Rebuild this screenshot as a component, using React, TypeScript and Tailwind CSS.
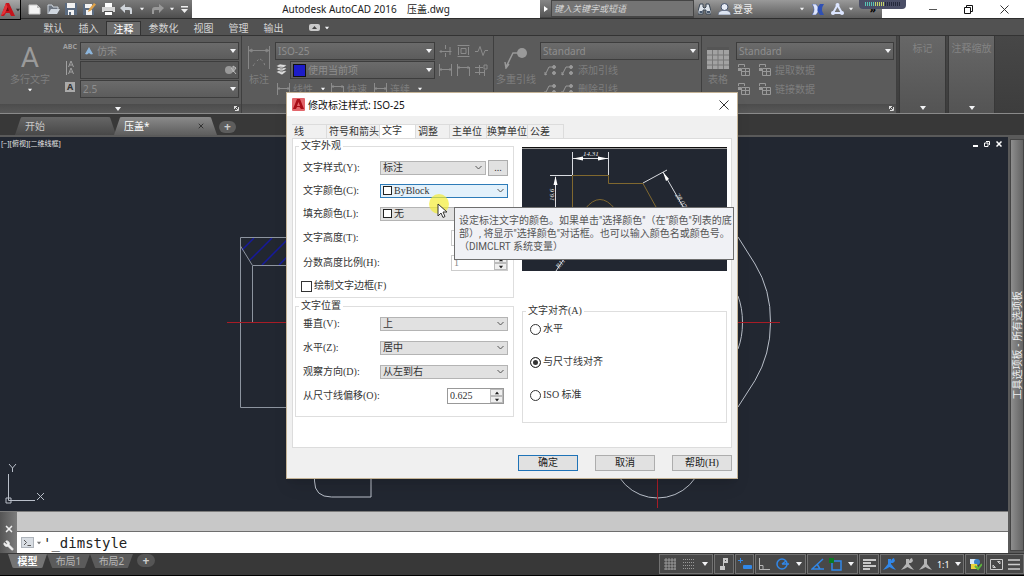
import type { ReactNode } from "react";
import { Wrench, X } from "lucide-react";
import clsx from "clsx";

const ribbonTabs = ["默认", "插入", "注释", "参数化", "视图", "管理", "输出"];

const dialogTabs = [
  { name: "线", width: "w-[35px]" },
  { name: "符号和箭头", width: "w-[53px]" },
  { name: "文字", width: "w-9" },
  { name: "调整", width: "w-[34px]" },
  { name: "主单位", width: "w-[37px]" },
  { name: "换算单位", width: "w-[41px]" },
  { name: "公差", width: "w-9" },
];

function Caret({ className = "text-gray-100" }: { className?: string }) {
  return (
    <svg viewBox="0 0 6 4" className={clsx("w-1.5 h-1 shrink-0", className)}>
      <path d="M0 0h6L3 4z" fill="currentColor" />
    </svg>
  );
}

function TitleBar() {
  return (
    <header className="flex h-[18px] shrink-0 bg-white">
      <div className="flex w-48 shrink-0 items-center bg-linear-to-b from-[#7b7b7b] to-[#4e4e4e] text-[#e8e8e8]">
        <button
          aria-label="应用程序菜单"
          className="relative z-10 mt-0.5 flex h-5 w-[21px] shrink-0 items-center border-r border-b border-black bg-linear-to-b from-[#a8a8a8] to-[#6c6c6c] pl-px"
        >
          <svg viewBox="0 0 14 14" className="size-3.5 shrink-0">
            <path d="M5 0h3l6 13H10L8.500 10H5L3 13H0z" fill="#c4141c" />
            <path d="M6.500 4L8 8H5z" fill="#7d0a10" />
            <path d="M5 0L0 13l4-3 2.500-6z" fill="#e3343a" />
          </svg>
          <Caret className="text-[#333] scale-75" />
        </button>
        <div className="flex flex-1 items-center justify-between pr-1 pl-[7px]">
          <button aria-label="新建">
            <svg viewBox="0 0 13 11" className="w-[13px] h-[11px]">
              <path d="M1 1h8l3 3v6H1z" fill="#f4f4f4" stroke="#ccc" />
              <path d="M9 1v3h3" fill="#bbb" />
            </svg>
          </button>
          <button aria-label="打开">
            <svg viewBox="0 0 13 11" className="w-[13px] h-[11px]">
              <path d="M1 10V1h4l1 2h5v2" fill="#6d7580" stroke="#cfd6de" />
              <path d="M1 10l3-5h9l-3 5z" fill="#cfd6de" />
            </svg>
          </button>
          <button aria-label="保存">
            <svg viewBox="0 0 12 12" className="size-3">
              <path d="M0 0h12v12H0z" fill="#5b6b80" />
              <path d="M2 0h8v5H2zM3 7h6v5H3z" fill="#f2f2f2" />
              <path d="M4 9h2v3H4z" fill="#5b6b80" />
            </svg>
          </button>
          <button aria-label="另存为">
            <svg viewBox="0 0 13 12" className="w-[13px] h-3">
              <path d="M0 1h11v11H0z" fill="#5b6b80" />
              <path d="M2 1h7v4H2zM3 7h6v5H3z" fill="#f2f2f2" />
              <path d="M5 9l1-3 5-6 2 1.500-5 6z" fill="#dfa24a" />
            </svg>
          </button>
          <button aria-label="打印">
            <svg viewBox="0 0 13 12" className="w-[13px] h-3">
              <path d="M3 0h7v4H3zM3 8h7v4H3z" fill="#fff" />
              <path d="M0 4h13v5H0z" fill="#d5d5d5" />
              <path d="M2 8h9v1H2z" fill="#555" />
            </svg>
          </button>
          <button aria-label="放弃">
            <svg viewBox="0 0 13 10" className="w-[13px] h-2.5">
              <path d="M0 4l5-4v3h4q3 0 3 3v4h-2V7q0-1-1-1H5v3z" fill="#cfd4da" />
            </svg>
          </button>
          <Caret className="text-gray-100 scale-75" />
          <button aria-label="重做">
            <svg viewBox="0 0 13 10" className="w-[13px] h-2.5">
              <path d="M13 4L8 0v3H4Q1 3 1 6v4h2V7q0-1 1-1h4v3z" fill="#999" />
            </svg>
          </button>
          <Caret className="text-gray-100 scale-75" />
          <svg viewBox="0 0 7 7" className="size-[7px]">
            <path d="M0 0h7v1.500H0zM0 3h7L3.500 7z" fill="#eee" />
          </svg>
        </div>
      </div>
      <h1 className="flex-1 whitespace-pre text-center text-[10px] leading-[18px] text-[#222]">
        {"Autodesk AutoCAD 2016    压盖.dwg"}
      </h1>
      <div className="flex w-[154px] shrink-0 bg-[#777] border-b border-[#444]">
        <button
          aria-label="展开搜索"
          className="flex w-[11px] items-center justify-center bg-linear-to-b from-[#868686] to-[#555]"
        >
          <svg viewBox="0 0 4 6" className="w-1 h-1.5">
            <path d="M0 0l4 3-4 3z" fill="#fff" />
          </svg>
        </button>
        <input
          aria-label="搜索"
          placeholder="键入关键字或短语"
          className="min-w-0 flex-1 border border-[#454545] bg-[#747474] px-0.5 text-[9px] italic placeholder:text-[#d4d4d4]"
        />
      </div>
      <div className="flex w-[188px] shrink-0 items-center bg-linear-to-b from-[#999] to-[#5d5d5d] pr-1.5 pl-1">
        <svg viewBox="0 0 13 12" className="w-[13px] h-3">
          <path d="M2 1h3v3l1 1h1l1-1V1h3l2 7v3H8V7H5v4H0V8z" fill="#dde3ea" stroke="#3b4654" />
          <path d="M1.500 8h3v2h-3zM9 8h3v2H9z" fill="#46566b" />
        </svg>
        <svg viewBox="0 0 13 12" className="ml-[7px] w-[13px] h-3">
          <circle cx="6.500" cy="4" r="3.500" fill="#e7ecf6" stroke="#45536d" />
          <path d="M0 12q0-4 4-4.500h5q4 .5 4 4.500z" fill="#dce4f1" stroke="#45536d" strokeWidth=".6" />
        </svg>
        <button className="ml-0.5 text-[10px] leading-3 text-[#eee]">登录</button>
        <span className="flex-1" />
        <Caret className="text-gray-100 scale-75" />
        <svg viewBox="0 0 12 11" className="ml-[7px] w-3 h-[11px]">
          <path d="M0 0h4q5 5.500 0 11H0q4-5.500 0-11z" fill="#dfe6fb" stroke="#2846a0" strokeWidth=".5" />
          <path d="M12 0H8Q3 5.500 8 11h4q-4-5.500 0-11z" fill="#2f50b4" />
        </svg>
        <svg viewBox="0 0 13 12" className="ml-[7px] w-[13px] h-3">
          <path d="M6.500 2L2 10h9z" fill="none" stroke="#dce6ff" strokeWidth="2" />
          <circle cx="6.500" cy="2" r="2" fill="#dce6ff" />
          <circle cx="2" cy="10" r="2" fill="#dce6ff" />
          <circle cx="11" cy="10" r="2" fill="#dce6ff" />
        </svg>
        <Caret className="ml-1 text-gray-100 scale-75" />
        <span className="ml-4 text-[10px] leading-3 font-bold text-black">»</span>
      </div>
      <div className="flex w-[142px] shrink-0 items-center justify-end gap-[27px] pr-[15px]">
        <button aria-label="最小化" className="h-px w-2 bg-[#555]" />
        <button aria-label="还原">
          <svg viewBox="0 0 9 9" className="size-[9px]" fill="none" stroke="#111">
            <path d="M.5 2.500h6v6h-6zM2.500 2V.5h6v6H7" />
          </svg>
        </button>
        <button aria-label="关闭">
          <svg viewBox="0 0 9 9" className="size-[9px]" stroke="#333">
            <path d="M.5.5l8 8M8.500.5l-8 8" />
          </svg>
        </button>
      </div>
    </header>
  );
}

function RibbonTabs() {
  return (
    <nav className="flex h-[17px] shrink-0 items-end border-t border-[#2e2e2e] bg-[#525252] pl-9 text-[10px] leading-[14px] text-[#d4d4d4]">
      {ribbonTabs.map((tab) => (
        <button
          key={tab}
          className={clsx(
            "h-[14px]",
            tab === "参数化" ? "w-[45px]" : "w-[35px]",
            tab === "注释" && "border-x border-t border-[#333] bg-[#6d6d6d] leading-3 text-white"
          )}
        >
          {tab}
        </button>
      ))}
      <button aria-label="最小化功能区" className="mb-1 ml-[18px] flex items-center gap-1">
        <svg viewBox="0 0 11 7" className="w-[11px] h-[7px]">
          <rect width="11" height="7" rx="2" fill="#c9c9c9" />
          <path d="M3 5h5L5.500 2z" fill="#444" />
        </svg>
        <Caret className="text-gray-100 scale-75" />
      </button>
    </nav>
  );
}

function RibbonSelect({
  label,
  value,
  className,
  icon,
}: {
  label: string;
  value: string;
  className?: string;
  icon?: ReactNode;
}) {
  return (
    <div
      className={clsx(
        "flex h-[18px] min-w-0 items-center border border-[#3d3d3d] bg-linear-to-b from-[#6b6b6b] to-[#5c5c5c] pr-0.5 pl-0.5",
        className
      )}
    >
      {icon}
      <select
        aria-label={label}
        className="min-w-0 flex-1 appearance-none text-[10px] leading-3 text-[#8e8e8e]"
      >
        <option>{value}</option>
      </select>
      <Caret />
    </div>
  );
}

function RibbonPanel({
  className,
  children,
  launcher,
  caret,
}: {
  className: string;
  children: ReactNode;
  launcher?: boolean;
  caret?: boolean;
}) {
  return (
    <section className={clsx("flex shrink-0 flex-col border-r border-[#3f3f3f]", className)}>
      <div className="flex flex-1 gap-1 pt-[6px]">{children}</div>
      <div className="flex h-[9px] items-center bg-linear-to-b from-[#4c4c4c] to-[#585858] px-0.5">
        <span className="flex flex-1 justify-center">{caret && <Caret />}</span>
        {launcher && (
          <svg viewBox="0 0 5 5" className="size-[5px]">
            <path d="M0 .5h3M.5 0v3M1 1l3 3M4.500 1v3.500H1" fill="none" stroke="#ddd" />
          </svg>
        )}
      </div>
    </section>
  );
}

function BigButton({
  label,
  caret,
  className,
  children,
}: {
  label: string;
  caret?: boolean;
  className: string;
  children: ReactNode;
}) {
  return (
    <button className={clsx("flex shrink-0 flex-col items-center text-[10px] leading-3 text-[#7e7e7e]", className)}>
      <span className="flex h-[31px] items-center justify-center">{children}</span>
      <span className="whitespace-nowrap">{label}</span>
      {caret && <Caret className="mt-[3px] text-gray-100 scale-75" />}
    </button>
  );
}

function DimIcon({ kind }: { kind: number }) {
  return (
    <svg viewBox="0 0 13 12" className="w-[13px] h-3 shrink-0" fill="none" stroke="#8b8b8b">
      {kind === 0 && <path d="M.5 6.500h12M6.500 0v4M6.500 8v4M2 5v3M11 2v8" />}
      {kind === 1 && <path d="M.5.5h12M.5 11.500h12M1.500 2v8M11.500 2v8M4 3.500h5v5H4z" />}
      {kind === 2 && <path d="M0 6.500h3l2-5 3 9 2-5h3" />}
      {kind === 3 && <path d="M.5 0v12M12.500 0v12M1 5.500h11M2 4v3M11 4v3" />}
      {kind === 4 && <path d="M.5 0v12M12.500 3v9M1 3.500h11M2 2v3M11 2v3" />}
      {kind === 5 && <path d="M0 3.500h8M0 8.500h10M4.500 1v10M9.500 6v6M9 1h3v4H9z" />}
    </svg>
  );
}

function LeaderIcon() {
  return (
    <svg viewBox="0 0 13 12" className="w-[13px] h-3" fill="none" stroke="#999">
      <path d="M1 11l4-8h3M1 8v3l2-1" />
      <circle cx="10" cy="3" r="1.500" fill="#999" />
      <circle cx="10" cy="9" r="1.500" fill="#999" />
    </svg>
  );
}

function DataIcon() {
  return (
    <svg viewBox="0 0 12 12" className="size-3" fill="none" stroke="#999">
      <path d="M.5 3V.5h6V3M3.500 4.500h8v7h-8zM4 7.500h7M7.500 5v6" />
      <path d="M0 4h3v3H0z" fill="#999" stroke="none" />
    </svg>
  );
}

function Ribbon() {
  return (
    <div className="flex h-[79px] shrink-0 border-y border-[#333] border-b-[#8a8a8a] bg-linear-to-b from-[#474747] to-[#3d3d3d]">
      <RibbonPanel className="w-[242px] bg-[#5b5b5b]" launcher caret>
        <BigButton label="多行文字" className="w-[60px]" caret>
          <span className="font-['Roboto',sans-serif] text-[28px] leading-6 text-[#9a9a9a]">A</span>
        </BigButton>
        <div className="flex w-3 shrink-0 flex-col items-center text-[#a0a0a0]">
          <span className="h-[19px] text-[7px] leading-[10px] font-bold">ABC</span>
          <svg viewBox="0 0 8 14" className="w-2 h-[14px]">
            <path d="M.5 0v14" stroke="#a0a0a0" />
            <path d="M2.500 6L5 0l2.500 6M3.500 4h3M2.500 13L5 7l2.500 6M3.500 11h3" fill="none" stroke="#a0a0a0" />
          </svg>
          <span className="mt-[7px] h-2.5 w-2.5 bg-[#aaa] text-center text-[9px] leading-[10px] font-bold text-[#333]">
            A
          </span>
        </div>
        <div className="flex min-w-0 flex-1 flex-col gap-px pr-0.5">
          <RibbonSelect
            label="文字样式"
            value="仿宋"
            icon={
              <svg viewBox="0 0 8 8" className="mx-0.5 mr-1 size-2 shrink-0">
                <path d="M4 0l4 7-2 .5L4 6 2 7.500 0 7z" fill="#8db6dc" />
              </svg>
            }
          />
          <div className="flex h-[18px] items-center border border-[#3d3d3d] bg-[#585858] pr-px">
            <input aria-label="查找文字" className="min-w-0 flex-1" />
            <svg viewBox="0 0 13 10" className="w-[13px] h-2.5 shrink-0">
              <circle cx="5" cy="5" r="4" fill="#999" />
              <path d="M7 3l5 6M9 1l3 2-3 4z" stroke="#bbb" fill="#888" />
            </svg>
          </div>
          <RibbonSelect label="文字高度" value="2.5" />
        </div>
      </RibbonPanel>

      <RibbonPanel className="w-[252px] bg-[#5b5b5b]">
        <BigButton label="标注" className="ml-[5px] w-6">
          <svg viewBox="0 0 22 24" className="w-[22px] h-6" fill="none" stroke="#878787">
            <path d="M.5 0v23M21.500 0v23M1 4.500h20M1 4.500l3-1.500v3zM21 4.500l-3-1.500v3z" />
            <path d="M5 20l2-3M9 15l2-2M12 13l3 2M16 17l1 3" strokeDasharray="2 1" />
          </svg>
        </BigButton>
        <div className="flex min-w-0 flex-1 flex-col gap-px">
          <RibbonSelect label="标注样式" value="ISO-25" />
          <div className="flex items-center gap-[3px]">
            <svg viewBox="0 0 12 12" className="size-3 shrink-0" fill="#ddd" stroke="#444" strokeWidth=".5">
              <path d="M1 8l4-2 7 1-5 4zM1 5l4-2 7 1-5 4zM1 2l4-2 7 1-5 4z" />
            </svg>
            <RibbonSelect
              label="标注图层"
              value="使用当前项"
              className="flex-1"
              icon={<span className="mr-0.5 size-[13px] shrink-0 border border-[#111] bg-[#1c1cc8]" />}
            />
          </div>
          <div className="flex h-[18px] items-center gap-[3px] pl-0.5 text-[10px] leading-3 whitespace-nowrap text-[#7e7e7e]">
            <DimIcon kind={3} />
            <span>线性</span>
            <Caret className="ml-1 mr-0.5 text-gray-100 scale-75" />
            <DimIcon kind={4} />
            <span>快速</span>
            <span className="w-px" />
            <DimIcon kind={3} />
            <span>连续</span>
            <Caret className="ml-1 text-gray-100 scale-75" />
          </div>
        </div>
        <div className="grid w-[54px] shrink-0 grid-cols-3 content-start gap-y-[7px] pt-[3px]">
          {[0, 1, 2, 3, 4, 5].map((kind) => (
            <DimIcon key={kind} kind={kind} />
          ))}
        </div>
      </RibbonPanel>

      <RibbonPanel className="w-52 bg-[#5b5b5b]">
        <BigButton label="多重引线" className="ml-0.5 w-10">
          <svg viewBox="0 0 24 22" className="w-6 h-[22px]" fill="none" stroke="#999" strokeWidth="1.500">
            <path d="M2 20L9 6h5M1 15l1 6 3-4" />
            <circle cx="18" cy="6" r="5" fill="#9a9a9a" stroke="none" />
          </svg>
        </BigButton>
        <div className="flex min-w-0 flex-1 flex-col gap-px pr-0.5 text-[10px] leading-3 text-[#7e7e7e]">
          <RibbonSelect label="多重引线样式" value="Standard" />
          <div className="flex h-[18px] items-center gap-1 pl-1">
            <LeaderIcon />
            <LeaderIcon />
            <span>添加引线</span>
          </div>
          <div className="flex h-[18px] items-center gap-1 pl-1">
            <LeaderIcon />
            <LeaderIcon />
            <span>删除引线</span>
          </div>
        </div>
      </RibbonPanel>

      <RibbonPanel className="w-[195px] bg-[#5b5b5b]" launcher>
        <BigButton label="表格" className="ml-0.5 w-7">
          <svg viewBox="0 0 22 22" className="size-[22px]">
            <path d="M0 0h22v22H0z" fill="#a2a2a2" />
            <path d="M0 0h22v3H0z" fill="#555" />
            <path d="M0 8h22M0 13h22M0 18h22M5.500 3v19M11 3v19M16.500 3v19" stroke="#777" />
          </svg>
        </BigButton>
        <div className="flex min-w-0 flex-1 flex-col gap-px pr-0.5 text-[10px] leading-3 text-[#7e7e7e]">
          <RibbonSelect label="表格样式" value="Standard" />
          <div className="flex h-[18px] items-center gap-1 pl-0.5">
            <DataIcon />
            <span className="w-px" />
            <DataIcon />
            <span>提取数据</span>
          </div>
          <div className="flex h-[18px] items-center gap-1 pl-0.5">
            <DataIcon />
            <span className="w-px" />
            <DataIcon />
            <span>链接数据</span>
          </div>
        </div>
      </RibbonPanel>

      {["标记", "注释缩放"].map((name) => (
        <button
          key={name}
          className="ml-0.5 flex w-[47px] shrink-0 flex-col items-center justify-between border-x border-[#383838] bg-linear-to-b from-[#676767] to-[#545454] pt-[6px] pb-[3px] text-[10px] leading-3 whitespace-nowrap text-[#838383]"
        >
          {name}
          <Caret />
        </button>
      ))}
    </div>
  );
}

function FileTabs() {
  return (
    <div className="flex h-[23px] shrink-0 items-start border-b-2 border-[#5a5a5a] bg-[#383838] pt-[3px] pl-[15px] text-[10px] leading-[18px]">
      <button className="h-[18px] w-[101px] rounded-t-lg bg-linear-to-b from-[#666] to-[#484848] pl-2.5 text-left text-[#c8c8c8] [clip-path:polygon(0_100%,6%_0,94%_0,100%_100%)]">
        开始
      </button>
      <div className="-ml-0.5 flex h-[18px] w-[103px] items-center rounded-t-lg bg-linear-to-b from-[#8a8a8a] to-[#5e5e5e] pr-3 pl-2.5 text-white [clip-path:polygon(0_100%,6%_0,94%_0,100%_100%)]">
        <span className="flex-1">压盖*</span>
        <button aria-label="关闭图形">
          <X className="size-2 text-[#333]" strokeWidth={3} />
        </button>
      </div>
      <button
        aria-label="新图形"
        className="mt-1 ml-0.5 h-3 w-[17px] rounded-full bg-[#5d5d5d] text-center text-[12px] leading-3 font-bold text-[#ccc]"
      >
        +
      </button>
    </div>
  );
}

function Canvas() {
  return (
    <main className="relative flex-1 overflow-hidden bg-[#222731]">
      <span className="block pl-px pt-px text-[7px] leading-3 text-[#e4e4e4]">[−][俯视][二维线框]</span>
      <div className="absolute top-1 right-1.5 flex items-center gap-1.5 text-white">
        <button aria-label="最小化图形" className="mt-1 h-0.5 w-[5px] bg-white" />
        <button aria-label="还原图形">
          <svg viewBox="0 0 6 6" className="size-1.5" fill="none" stroke="#fff">
            <path d="M.5 2h3.500v3.500H.5zM2 .5h3.500V4" />
          </svg>
        </button>
        <button aria-label="关闭图形窗口">
          <svg viewBox="0 0 6 6" className="size-1.5" stroke="#fff" strokeWidth="1.500">
            <path d="M.5.5l5 5M5.500.5l-5 5" />
          </svg>
        </button>
      </div>
      <svg viewBox="0 0 1008 373" className="absolute top-0 left-0 h-[373px] w-[1008px]" fill="none">
        <path
          d="M242 113l12-12M250 123l22-22M262 128l27-27M279 128l22-22"
          stroke="#161a9c"
          strokeWidth="1.500"
        />
        <path d="M300 100.500h-59.500v170H300M240.500 109l12 19.500H300M252.500 129v56" stroke="#8d949f" />
        <g stroke="#b9bfc9">
          <path d="M314.500 330v14q0 16 17 16h39.500V330" />
          <circle cx="657.500" cy="315.500" r="45.500" />
          <path d="M738 100l17 27q16 26 15.500 58.500 0 32-15.500 58L738 270M738 159q4.500 12 4.500 26.500T738 212" />
          <path d="M8.500 337v26.500H35M6 361h5v5H6zM9 327l3.500 4 3.500-4M12.500 331v4M37 356l7 7M44 356l-7 7" />
        </g>
        <path d="M227 185.500h73M730 185.500h50M657.500 340v31" stroke="#a81c26" />
      </svg>
    </main>
  );
}

function CommandLine() {
  return (
    <div className="flex h-[42px] shrink-0 border-t border-[#7c7c7c] bg-white">
      <div className="flex w-[17px] shrink-0 flex-col items-center justify-between bg-linear-to-r from-[#555] to-[#7d7d7d] pt-3 pb-0.5 text-[#f0f0f0]">
        <button aria-label="关闭命令行">
          <X className="size-2.5" strokeWidth={4} />
        </button>
        <button aria-label="自定义">
          <Wrench className="size-[11px] -scale-x-100" fill="currentColor" />
        </button>
      </div>
      <div className="flex flex-1 flex-col">
        <div className="h-5 border-b border-[#6e6e6e] bg-[#c8c8c8]" />
        <label className="flex flex-1 items-center pl-1">
          <svg viewBox="0 0 13 11" className="w-[13px] h-[11px]">
            <rect x=".5" y=".5" width="12" height="10" fill="#d8dde3" stroke="#aeb4bb" />
            <path d="M3 3l2.500 2.500L3 8M6.500 8.500H10" fill="none" stroke="#555" />
          </svg>
          <Caret className="ml-0.5 text-[#777] scale-75" />
          <input
            aria-label="命令"
            defaultValue="'_dimstyle"
            className="min-w-0 flex-1 pl-px font-['DejaVu_Sans_Mono',monospace] text-[14px] leading-[18px] text-[#222]"
          />
        </label>
      </div>
    </div>
  );
}

function StatusGroup({ className, children }: { className: string; children: ReactNode }) {
  return (
    <div className={clsx("flex h-5 items-center justify-around border border-[#727272] bg-[#484848]", className)}>
      {children}
    </div>
  );
}

function Person({ color, extra }: { color: string; extra?: boolean }) {
  return (
    <svg viewBox="0 0 13 13" className="size-[13px]" fill={color}>
      <path d="M5 1h3v5l5 6-4-1.500L6.500 9 4 10.500 0 12l5-6z" />
      {extra && <path d="M8 3l1-2 2-1 1 3-2 2H8z" />}
    </svg>
  );
}

function StatusBar() {
  return (
    <footer className="flex h-[23px] shrink-0 items-start border-b border-black bg-[#383838] text-[10px] leading-[13px]">
      <div className="flex pt-px pl-2">
        <button className="h-[14px] w-[39px] rounded-b-md bg-[#747474] font-bold text-white [clip-path:polygon(0_0,100%_0,88%_100%,12%_100%)]">
          模型
        </button>
        {["布局1", "布局2"].map((name) => (
          <button
            key={name}
            className="h-[14px] w-[43px] rounded-b-md bg-[#5b5b5b] text-[#b5b5b5] [clip-path:polygon(0_0,100%_0,88%_100%,12%_100%)]"
          >
            {name}
          </button>
        ))}
        <button
          aria-label="新建布局"
          className="ml-1 h-[13px] w-[18px] rounded-full bg-[#555] text-[12px] leading-3 font-bold text-[#ccc]"
        >
          +
        </button>
      </div>
      <div className="ml-auto flex gap-px pt-px">
        <StatusGroup className="w-[54px]">
          <svg viewBox="0 0 12 12" className="size-3">
            <path
              d="M2 0v12M5 0v12M8 0v12M11 0v12M0 2h12M0 5h12M0 8h12M0 11h12"
              stroke="#aaa"
              strokeWidth=".8"
            />
          </svg>
          <svg viewBox="0 0 12 12" className="size-3">
            <path d="M0 1.500h12M0 4.500h12M0 7.500h12M0 10.500h12" stroke="#999" strokeDasharray="1 1" />
          </svg>
          <Caret />
        </StatusGroup>
        <StatusGroup className="w-5">
          <svg viewBox="0 0 8 12" className="w-2 h-3" fill="#c8c8c8">
            <path d="M3 0h5v5H4v3h1v4H0V8h3zM5 2v1h1V2z" />
          </svg>
        </StatusGroup>
        <StatusGroup className="w-[19px]">
          <svg viewBox="0 0 14 12" className="w-[14px] h-3" fill="#3187e8">
            <path d="M2 0h1v2h2v1H3v2H2V3H0V2h2z" />
            <rect x="5" y="7" width="9" height="4" rx="1" />
          </svg>
        </StatusGroup>
        <StatusGroup className="w-[51px]">
          <svg viewBox="0 0 11 12" className="w-[11px] h-3" fill="none" stroke="#b5b5b5">
            <path d="M.5 0v11.500H11M.5 7.500h3.500v4" />
          </svg>
          <svg viewBox="0 0 13 12" className="w-[13px] h-3" fill="none" stroke="#3187e8" strokeWidth="1.500">
            <circle cx="6" cy="6" r="5" />
            <path d="M6 6h7M6 6l4-3" />
          </svg>
          <Caret />
        </StatusGroup>
        <StatusGroup className="w-[51px]">
          <svg viewBox="0 0 13 12" className="w-[13px] h-3" fill="none" stroke="#3187e8" strokeWidth="1.500">
            <path d="M12 1L1 11h12M6 6l3 5" />
          </svg>
          <svg viewBox="0 0 13 13" className="size-[13px]">
            <path d="M3 3h9v9H3z" fill="none" stroke="#3187e8" strokeWidth="1.500" />
            <path d="M0 0h5v5H0z" fill="#0b7a22" />
          </svg>
          <Caret />
        </StatusGroup>
        <StatusGroup className="w-5">
          <svg viewBox="0 0 13 11" className="w-[13px] h-[11px]" fill="#c8c8c8">
            <path d="M0 0h13v2H0zM0 3h8v2H0zM0 6h13v2H0zM0 9h7v2H0z" />
          </svg>
        </StatusGroup>
        <StatusGroup className="w-[84px] text-white">
          <Person color="#3187e8" extra />
          <Person color="#b5b5b5" extra />
          <Person color="#b5b5b5" />
          <span className="text-[9px]">1:1</span>
          <Caret />
        </StatusGroup>
        <StatusGroup className="w-5">
          <svg viewBox="0 0 13 13" className="size-[13px]">
            <path d="M1 1h7v5H1z" fill="#d6e7f5" />
            <circle cx="8" cy="4" r="3" fill="#3c80c4" />
            <path d="M2 6h6l1 5H2z" fill="#e8d23c" />
            <path d="M6 8l3 3 4-5" stroke="#5cb53c" strokeWidth="2" fill="none" />
          </svg>
        </StatusGroup>
        <StatusGroup className="w-[38px]">
          <svg viewBox="0 0 13 11" className="w-[13px] h-[11px]" fill="none" stroke="#ccc">
            <path d="M.5.5h12v10H.5zM3 8.500h2.500L3 6zM10 2.500H7.500L10 5z" />
          </svg>
          <svg viewBox="0 0 12 11" className="w-3 h-[11px]" stroke="#ccc" strokeWidth="1.500">
            <path d="M0 1h12M0 5.500h12M0 10h12" />
          </svg>
        </StatusGroup>
      </div>
    </footer>
  );
}

function Combo({
  id,
  value,
  className = "w-32",
  active,
  swatch,
}: {
  id: string;
  value: string;
  className?: string;
  active?: boolean;
  swatch?: boolean;
}) {
  return (
    <div
      className={clsx(
        "flex h-[14px] shrink-0 items-center border pr-[3px] pl-0.5",
        active ? "border-[#2d7bb8] bg-[#e3f1fb]" : "border-[#b4b4b4] bg-[#e1e1e1]",
        className
      )}
    >
      {swatch && <span className="mr-0.5 size-[9px] shrink-0 border border-[#222] bg-white" />}
      <select id={id} className="h-3 min-w-0 flex-1 appearance-none leading-3">
        <option>{value}</option>
      </select>
      <svg viewBox="0 0 7 4" className="w-[7px] h-1" fill="none" stroke="#555">
        <path d="M.5 0l3 3 3-3" />
      </svg>
    </div>
  );
}

function Spinner({ id, value, disabled }: { id: string; value: string; disabled?: boolean }) {
  return (
    <div className={clsx("flex h-4 w-[57px] shrink-0 border", disabled ? "border-[#ccc] text-[#888]" : "border-[#999]")}>
      <input id={id} defaultValue={value} disabled={disabled} className="min-w-0 flex-1 px-0.5 leading-3" />
      <div className="flex w-[13px] flex-col">
        <button aria-label="增加" className="flex h-[7px] items-center justify-center border border-[#bbb] bg-[#eee]">
          <Caret className="rotate-180 scale-75 text-[#222]" />
        </button>
        <button aria-label="减少" className="flex h-[7px] items-center justify-center border border-[#bbb] bg-[#eee]">
          <Caret className="scale-75 text-[#222]" />
        </button>
      </div>
    </div>
  );
}

function Row({
  id,
  label,
  className = "h-6",
  children,
}: {
  id: string;
  label: string;
  className?: string;
  children: ReactNode;
}) {
  return (
    <div className={clsx("flex items-center", className)}>
      <label htmlFor={id} className="flex-1 whitespace-nowrap">
        {label}
      </label>
      {children}
    </div>
  );
}

function Group({ title, className, children }: { title: string; className?: string; children: ReactNode }) {
  return (
    <fieldset className={clsx("border border-[#dedede] pr-[5px] pl-[7px]", className)}>
      <legend className="-ml-1 h-3 px-0.5">{title}</legend>
      {children}
    </fieldset>
  );
}

function Preview() {
  return (
    <svg viewBox="0 0 205 124" className="mt-[7px] h-[124px] w-[205px] bg-[#222731]" fill="none">
      <path d="M0 .5h205" stroke="#111" />
      <path d="M0 1.500h205" stroke="#999" />
      <path d="M50.500 62V28.500h36v8H121L134 60M63 62q15-19 30 0" stroke="#80682f" />
      <path
        d="M50.500 5v23M86.500 5v23M51 11.500h35M28 28.500h22M33.500 30v35M121 36l24-13M141 25l26 45M34 124l12-18"
        stroke="#d9dbe0"
      />
      <path d="M51 11.500l10-2v4zM86 11.500l-10-2v4zM33.500 29l-2 9h4zM141 25l3 9 3-2z" fill="#fff" />
      <g fill="#e4e4e4" fontSize="7" fontStyle="italic">
        <text x="61" y="9">14.31</text>
        <text transform="translate(32 54) rotate(-90)">16.6</text>
        <text transform="translate(153 48) rotate(60)">28.07</text>
        <text transform="translate(37 122) rotate(-52)">R11</text>
      </g>
    </svg>
  );
}

function Dialog() {
  return (
    <div
      role="dialog"
      aria-label="修改标注样式"
      className="absolute top-[92px] left-1/2 w-[452px] -translate-x-1/2 border border-[#c4b396] bg-[#f0f0f0] pb-[7px] shadow-lg"
    >
      <div className="flex h-[23px] items-center bg-white pr-2 pl-[5px]">
        <svg viewBox="0 0 13 13" className="size-[13px]">
          <rect width="13" height="13" rx="1" fill="#e2666b" />
          <path d="M5 1h3l4 10H9L7.500 9H5L4 11H1z" fill="#a80d16" />
          <path d="M6.500 4L8 8H5z" fill="#e2666b" />
        </svg>
        <h2 className="ml-[3px] flex-1 text-[10px] leading-3 text-[#111]">修改标注样式: ISO-25</h2>
        <button aria-label="关闭对话框">
          <svg viewBox="0 0 10 10" className="size-2.5" stroke="#333">
            <path d="M.5.5l9 9M9.500.5l-9 9" />
          </svg>
        </button>
      </div>
      <div className="px-[5px] pt-2 font-['Liberation_Serif','Noto_Sans_CJK_SC',serif] text-[10px] leading-3 text-[#333]">
        <div role="tablist" className="flex h-[14px]">
          {dialogTabs.map((tab) => (
            <button
              key={tab.name}
              role="tab"
              aria-selected={tab.name === "文字"}
              className={clsx(
                "shrink-0 border-t border-r border-[#dcdcdc] text-left whitespace-nowrap",
                tab.width,
                tab.name === "文字" && "bg-white pb-0.5",
                tab.name === "换算单位" ? "pl-0" : "pl-0.5"
              )}
            >
              {tab.name}
            </button>
          ))}
        </div>
        <div className="flex gap-2 border border-[#dcdcdc] bg-white px-0.5 pt-px pb-6">
          <div className="w-[219px]">
            <Group title="文字外观">
              <div className="pt-1">
                <Row id="text-style" label="文字样式(Y):" className="h-[23px]">
                  <Combo id="text-style" value="标注" className="w-[106px]" />
                  <button className="ml-0.5 h-4 w-5 border border-[#adadad] bg-[#e1e1e1] leading-3">...</button>
                </Row>
                <Row id="text-color" label="文字颜色(C):" className="h-[23px]">
                  <Combo id="text-color" value="ByBlock" active swatch />
                </Row>
                <Row id="fill-color" label="填充颜色(L):" className="h-[23px]">
                  <Combo id="fill-color" value="无" swatch />
                </Row>
                <Row id="text-height" label="文字高度(T):" className="h-[26px]">
                  <Spinner id="text-height" value="2.5" disabled />
                </Row>
                <Row id="fraction" label="分数高度比例(H):">
                  <Spinner id="fraction" value="1" disabled />
                </Row>
                <label className="flex h-[22px] items-center gap-0.5">
                  <input type="checkbox" className="-ml-0.5 size-[11px] appearance-none border border-[#333]" />
                  绘制文字边框(F)
                </label>
              </div>
            </Group>
            <Group title="文字位置" className="mt-0.5 pb-2">
              <Row id="vertical" label="垂直(V):">
                <Combo id="vertical" value="上" />
              </Row>
              <Row id="horizontal" label="水平(Z):">
                <Combo id="horizontal" value="居中" />
              </Row>
              <Row id="direction" label="观察方向(D):">
                <Combo id="direction" value="从左到右" />
              </Row>
              <Row id="offset" label="从尺寸线偏移(O):" className="h-6 pr-1">
                <Spinner id="offset" value="0.625" />
              </Row>
            </Group>
          </div>
          <div className="flex w-[205px] flex-col">
            <Preview />
            <Group title="文字对齐(A)" className="mt-[34px] pb-[15px]">
              <div className="flex flex-col gap-[9px]">
                {["水平", "与尺寸线对齐", "ISO 标准"].map((name) => (
                  <label key={name} className="flex h-6 items-center gap-0.5">
                    <input
                      type="radio"
                      name="align"
                      defaultChecked={name === "与尺寸线对齐"}
                      className="size-[11px] appearance-none rounded-full border border-[#333] checked:bg-[#333] checked:shadow-[inset_0_0_0_2px_white]"
                    />
                    {name}
                  </label>
                ))}
              </div>
            </Group>
          </div>
        </div>
        <div className="flex justify-end gap-[17px] pt-[7px]">
          {["确定", "取消", "帮助(H)"].map((name) => (
            <button
              key={name}
              className={clsx(
                "h-4 w-[60px] border bg-[#e1e1e1] text-[#222]",
                name === "确定" ? "border-[#1f73b7]" : "border-[#adadad]"
              )}
            >
              {name}
            </button>
          ))}
        </div>
      </div>

      {/* tooltip of the text colour list */}
      <div
        role="tooltip"
        className="absolute top-[114px] left-[167px] w-[280px] border border-[#6e6e6e] bg-[#f0f1f5] px-1 py-[6px] font-['Roboto','Noto_Sans_CJK_SC',sans-serif] text-[10px] leading-[13px] whitespace-nowrap text-[#555]"
      >
        设定标注文字的颜色。如果单击"选择颜色"（在"颜色"列表的底
        <br />
        部）, 将显示"选择颜色"对话框。也可以输入颜色名或颜色号。
        <br />
        （DIMCLRT 系统变量）
      </div>

      <svg viewBox="0 0 24 26" className="pointer-events-none absolute top-[101px] left-[141px] h-[26px] w-6">
        <circle cx="11" cy="10" r="10" fill="#f3ec35" fillOpacity=".7" />
        <path d="M10 10v12l3-3 2 4.500 2-1-2-4.500h4z" fill="#fff" stroke="#333" />
      </svg>
    </div>
  );
}

export default function App() {
  return (
    <div className="relative flex h-screen flex-col overflow-hidden bg-[#5a5a5a] font-['Noto_Sans','Noto_Sans_CJK_SC',sans-serif]">
      <TitleBar />
      <RibbonTabs />
      <Ribbon />
      <FileTabs />
      <div className="flex min-h-0 flex-1">
        <div className="flex min-w-0 flex-1 flex-col">
          <Canvas />
          <CommandLine />
        </div>
        <aside className="mt-0.5 mb-0.5 ml-0.5 flex w-[14px] shrink-0 items-center justify-center border border-[#444] bg-linear-to-r from-[#8e8e8e] to-[#636363]">
          <span className="rotate-180 text-[10px] leading-3 whitespace-nowrap text-[#f0f0f0] [text-orientation:sideways] [writing-mode:vertical-rl]">
            工具选项板 - 所有选项板
          </span>
        </aside>
      </div>
      <StatusBar />
      <Dialog />

      {/* recorder level meter at the top edge */}
      <div className="absolute top-0 right-[118px] z-20 flex h-[9px] w-[47px] justify-center gap-px rounded-b bg-[#4a4e66] pt-0.5">
        {Array.from({ length: 18 }, (_, i) => (
          <span
            key={i}
            className={clsx("h-1 w-px", i < 5 ? "bg-[#58c4b4]" : i < 10 ? "bg-[#c5d36a]" : "bg-[#24283c]")}
          />
        ))}
      </div>
    </div>
  );
}
